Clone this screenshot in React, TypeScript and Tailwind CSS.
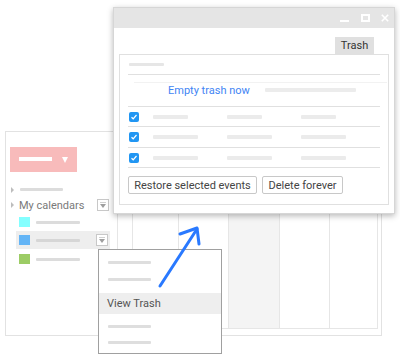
import React from "react";

const Bar = ({ w, c = "bg-[#e6e6e6]", h = "h-[4px]" }: { w: string; c?: string; h?: string }) => (
  <div className={`${w} ${h} ${c} rounded-[1px]`} />
);

const TriRight = () => (
  <div className="w-0 h-0 border-y-[3px] border-y-transparent border-l-[3px] border-l-[#bdbdbd]" />
);

const DropBox = () => (
  <div className="w-[12px] h-[12px] border border-[#c8c8c8] bg-white flex flex-col items-center justify-center gap-[1px]">
    <div className="w-[6px] h-px bg-[#d0d0d0]" />
    <div className="w-0 h-0 border-x-[3px] border-x-transparent border-t-[4px] border-t-[#9e9e9e]" />
  </div>
);

const Check = () => (
  <div className="w-[10px] h-[10px] rounded-[2px] bg-[#2196f3] flex items-center justify-center">
    <svg width="8" height="8" viewBox="0 0 8 8">
      <path d="M1.5 4.2 L3.2 5.8 L6.5 2" stroke="white" strokeWidth="1.2" fill="none" />
    </svg>
  </div>
);

const Row = ({ ws, h }: { ws: string[]; h: string }) => (
  <div className={`flex items-center ${h} border-b border-[#e0e0e0]`}>
    <div className="w-[25px] pl-[1px]">
      <Check />
    </div>
    <div className="w-[74px]"><Bar w={ws[0]} c="bg-[#ebebeb]" /></div>
    <div className="w-[74px]"><Bar w={ws[1]} c="bg-[#ebebeb]" /></div>
    <div className="w-[74px]"><Bar w={ws[2]} c="bg-[#ebebeb]" /></div>
  </div>
);

export default function App() {
  return (
    <div
      className="relative w-[400px] h-[361px] bg-white overflow-hidden"
      style={{ fontFamily: "Roboto, 'Liberation Sans', sans-serif" }}
    >
      {/* background calendar */}
      <div className="absolute left-[5px] top-[131px] w-[377px] h-[205px] border border-[#e2e2e2] flex pr-[3px] pb-[6px]">
        {/* sidebar */}
        <div className="w-[111px] flex flex-col">
          <div className="ml-[4px] mt-[15px] w-[67px] h-[25px] bg-[#f8bbbb] flex items-start pt-[10px] pl-[9px]">
            <div className="w-[33px] h-[4px] bg-white" />
            <div className="ml-[10px] mt-0 w-0 h-0 border-x-[3.5px] border-x-transparent border-t-[6px] border-t-white" />
          </div>
          <div className="mt-[10px] h-[15px] flex items-center pl-[5px]">
            <TriRight />
            <div className="ml-[6px]"><Bar w="w-[43px]" h="h-[3px]" c="bg-[#dcdcdc]" /></div>
          </div>
          <div className="h-[16px] flex items-center pl-[5px] pr-[8px]">
            <TriRight />
            <span className="ml-[5px] text-[11px] leading-none text-[#7a7a7a] whitespace-nowrap">My calendars</span>
            <div className="ml-auto"><DropBox /></div>
          </div>
          <div className="h-[18px] flex items-center pl-[13px]">
            <div className="w-[11px] h-[10px] bg-[#84ffff]" />
            <div className="ml-[6px]"><Bar w="w-[44px]" h="h-[3px]" c="bg-[#dcdcdc]" /></div>
          </div>
          <div className="ml-[10px] w-[94px] h-[18px] bg-[#eeeeee] flex items-center pl-[3px] pr-[2px]">
            <div className="w-[11px] h-[10px] bg-[#64b5f6]" />
            <div className="ml-[6px]"><Bar w="w-[44px]" h="h-[3px]" c="bg-[#d6d6d6]" /></div>
            <div className="ml-auto"><DropBox /></div>
          </div>
          <div className="mt-[1px] h-[18px] flex items-center pl-[13px]">
            <div className="w-[11px] h-[10px] bg-[#9ccc65]" />
            <div className="ml-[6px]"><Bar w="w-[44px]" h="h-[3px]" c="bg-[#dcdcdc]" /></div>
          </div>
        </div>
        {/* grid */}
        <div className="mt-[8px] flex-1 border border-[#e6e6e6] flex">
          <div className="w-[14px]" />
          <div className="w-[46px] border-l border-[#e6e6e6]" />
          <div className="w-[50px] border-l border-[#e6e6e6]" />
          <div className="w-[51px] border-l border-[#e6e6e6] bg-[#f4f4f4]" />
          <div className="w-[50px] border-l border-[#e6e6e6]" />
          <div className="w-[48px] border-l border-[#e6e6e6]" />
        </div>
      </div>

      {/* trash window */}
      <div className="absolute left-[113px] top-[7px] w-[282px] h-[207px] bg-white border border-[#d6d6d6] shadow-[0_2px_6px_rgba(0,0,0,0.28)] flex flex-col">
        <div className="h-[20px] bg-[#e5e5e5] flex items-center justify-end pr-[5px]">
          <div className="w-[9px] h-[2px] bg-white mt-[6px]" />
          <div className="ml-[12px] w-[9px] h-[8px] border-2 border-white" />
          <svg className="ml-[11px]" width="8" height="8" viewBox="0 0 8 8">
            <path d="M0.8 0.8 L7.2 7.2 M7.2 0.8 L0.8 7.2" stroke="white" strokeWidth="1.6" />
          </svg>
        </div>
        <div className="flex justify-end mt-[9px] mr-[20px]">
          <div className="w-[39px] h-[17px] bg-[#e0e0e0] flex items-center justify-center text-[11px] leading-none text-[#333]">
            Trash
          </div>
        </div>
        <div className="ml-[5px] w-[270px] h-[151px] border border-[#e0e0e0] flex flex-col px-[8px]">
          <div className="h-[19px] pt-[8px] pl-[1px]">
            <Bar w="w-[35px]" h="h-[3px]" c="bg-[#e6e6e6]" />
          </div>
          <div className="h-px bg-[#e0e0e0]" />
          <div className="h-[7px]" />
          <div className="h-px bg-[#f2f2f2] ml-[6px] -mr-[7px]" />
          <div className="h-[14px] flex items-center">
            <span className="ml-[40px] text-[11px] leading-none text-[#4285f4] whitespace-nowrap">Empty trash now</span>
            <div className="ml-auto mr-[24px]"><Bar w="w-[91px]" c="bg-[#ececec]" /></div>
          </div>
          <div className="h-[10px] border-b border-[#e0e0e0]" />
          <Row ws={["w-[35px]", "w-[35px]", "w-[35px]"]} h="h-[20px]" />
          <Row ws={["w-[45px]", "w-[45px]", "w-[45px]"]} h="h-[21px]" />
          <Row ws={["w-[45px]", "w-[45px]", "w-[45px]"]} h="h-[20px]" />
          <div className="mt-[8px] flex gap-[5px]">
            <div className="w-[129px] h-[18px] border border-[#c8c8c8] rounded-[2px] flex items-center justify-center text-[11px] leading-none text-[#444] whitespace-nowrap">
              Restore selected events
            </div>
            <div className="w-[81px] h-[18px] border border-[#c8c8c8] rounded-[2px] flex items-center justify-center text-[11px] leading-none text-[#444] whitespace-nowrap">
              Delete forever
            </div>
          </div>
        </div>
      </div>

      {/* context menu */}
      <div className="absolute left-[98px] top-[249px] w-[124px] h-[105px] bg-white border border-[#a0a0a0] flex flex-col">
        <div className="mt-[11px] ml-[9px]"><Bar w="w-[43px]" h="h-[3px]" c="bg-[#dedede]" /></div>
        <div className="mt-[14px] ml-[9px]"><Bar w="w-[43px]" h="h-[3px]" c="bg-[#dedede]" /></div>
        <div className="mt-[12px] h-[21px] bg-[#eeeeee] flex items-center pl-[8px] text-[11px] leading-none text-[#555] whitespace-nowrap">
          View Trash
        </div>
        <div className="mt-[11px] ml-[9px]"><Bar w="w-[43px]" h="h-[3px]" c="bg-[#dedede]" /></div>
        <div className="mt-[13px] ml-[9px]"><Bar w="w-[43px]" h="h-[3px]" c="bg-[#dedede]" /></div>
      </div>

      {/* arrow */}
      <svg className="absolute left-0 top-0" width="400" height="361" viewBox="0 0 400 361">
        <path d="M160 286 L197 229" stroke="#2979ff" strokeWidth="3" strokeLinecap="round" fill="none" />
        <path d="M180 234 L197 228 L199 244" stroke="#2979ff" strokeWidth="3" strokeLinecap="round" strokeLinejoin="round" fill="none" />
      </svg>
    </div>
  );
}
